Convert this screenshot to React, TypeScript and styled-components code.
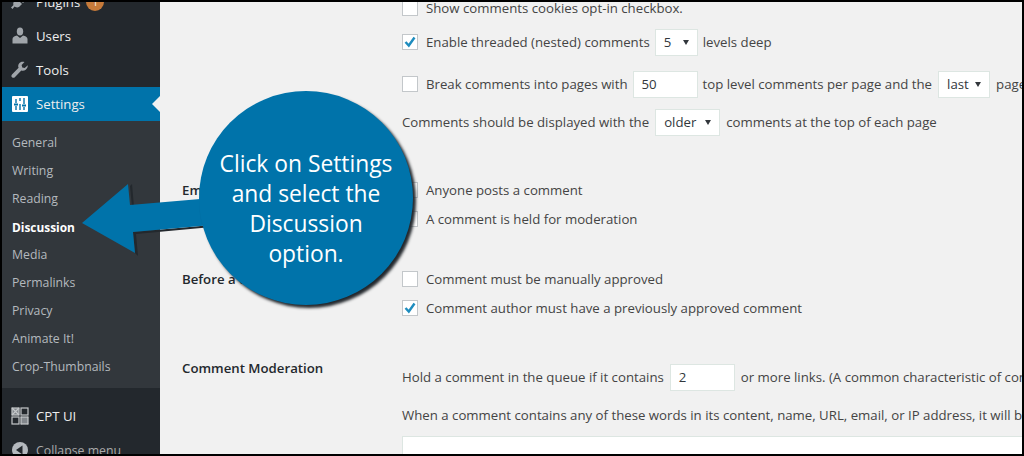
import * as React from 'react';
import styled, { createGlobalStyle } from 'styled-components';

const GlobalStyle = createGlobalStyle`
  html, body { margin: 0; padding: 0; background: #000; }
  body { font-family: "Open Sans", "Noto Sans", sans-serif; font-size: 13px; }
`;

const Frame = styled.div`
  position: relative;
  box-sizing: border-box;
  width: 1024px;
  height: 456px;
  border: 2px solid #000;
  display: flex;
  overflow: hidden;
  background: #f1f1f1;
`;

const Sidebar = styled.nav`
  flex: 0 0 158px;
  background: #23282d;
  display: flex;
  flex-direction: column;
  margin-top: -17px;
`;

const MenuItem = styled.div<{ $active?: boolean }>`
  position: relative;
  flex: 0 0 34px;
  display: flex;
  align-items: center;
  gap: 6px;
  padding-left: 8px;
  color: #eee;
  font-size: 13.2px;
  background: ${({ $active }) => ($active ? '#0073aa' : 'transparent')};
  svg { flex: 0 0 20px; }
`;

const Pointer = styled.span`
  position: absolute;
  right: 0;
  top: 9px;
  border: 8px solid transparent;
  border-right-color: #f1f1f1;
  border-left-width: 0;
`;

const Badge = styled.span`
  width: 18px;
  height: 18px;
  border-radius: 50%;
  background: #c67a3a;
  color: #fff;
  font-size: 9px;
  display: flex;
  align-items: center;
  justify-content: center;
`;

const SubMenu = styled.div`
  background: #32373c;
  padding: 8px 0 7px;
  margin-bottom: 11px;
`;

const SubItem = styled.div<{ $current?: boolean }>`
  height: 28px;
  line-height: 28px;
  padding-left: 10px;
  font-size: ${({ $current }) => ($current ? '11.9px' : '12.25px')};
  color: ${({ $current }) => ($current ? '#fff' : '#b4b9be')};
  font-weight: ${({ $current }) => ($current ? 700 : 400)};
`;

const Collapse = styled(MenuItem)`
  color: #aaa;
  font-size: 12.3px;
`;

const Content = styled.main`
  flex: 1;
  padding: 0 0 0 22px;
  color: #444;
  font-size: 13.23px;
  white-space: nowrap;
  overflow: hidden;
`;

const Section = styled.section<{ $mt: number }>`
  display: grid;
  grid-template-columns: 220px 1fr;
  margin-top: ${({ $mt }) => $mt}px;
`;

const Label = styled.div`
  color: #23282d;
  font-weight: 600;
  line-height: 30px;
`;

const Line = styled.div<{ $mt?: number }>`
  height: 30px;
  display: flex;
  align-items: center;
  margin-top: ${({ $mt }) => $mt ?? 0}px;
`;

const Box = styled.span`
  box-sizing: border-box;
  flex: 0 0 16px;
  width: 16px;
  height: 16px;
  margin-right: 8px;
  background: #fff;
  border: 1px solid #c3c7ca;
  display: flex;
  align-items: center;
  justify-content: center;
`;

const Field = styled.span<{ $w: number; $mx: number }>`
  box-sizing: border-box;
  flex: 0 0 ${({ $w }) => $w}px;
  width: ${({ $w }) => $w}px;
  height: 27px;
  margin: 0 ${({ $mx }) => $mx}px;
  padding: 0 8px;
  background: #fff;
  border: 1px solid #dde6e2;
  color: #32373c;
  display: flex;
  align-items: center;
  justify-content: space-between;
`;

const Caret = styled.span`
  border: 3px solid transparent;
  border-top: 5px solid #32373c;
  border-bottom: 0;
`;

const TextArea = styled.div`
  height: 40px;
  margin-top: 6px;
  background: #fff;
  border: 1px solid #dde6e2;
`;

const Callout = styled.div`
  position: absolute;
  left: 197px;
  top: 89px;
  box-sizing: border-box;
  width: 214px;
  height: 214px;
  padding-top: 22px;
  border-radius: 50%;
  background: #0073aa;
  box-shadow: 3px 3px 3px #23282d;
  display: flex;
  align-items: center;
  justify-content: center;
  text-align: center;
  color: #fff;
  font-size: 22.8px;
  line-height: 30px;
`;

const Arrow = styled.svg`
  position: absolute;
  left: 70px;
  top: 170px;
`;

const Check = () => (
  <svg width="14" height="14" viewBox="0 0 14 14">
    <path d="M2.500 7 L5.800 10.500 L11.500 2.500" fill="none" stroke="#1e8cbe" strokeWidth="2.400" />
  </svg>
);

const PluginIcon = () => (
  <svg width="20" height="20" viewBox="0 0 20 20" fill="#a0a5aa">
    <path d="M13 11 9 7l3-3 1.500 1L16 2.500 17.500 4 15 6.500l1 1.500zM8 8l4 4-3 3c-2 1-4 0-4.500-.5L2.500 17 1 15.500l2.500-2.500C3 12 3 10 5 8.500z" />
  </svg>
);

const UsersIcon = () => (
  <svg width="20" height="20" viewBox="0 0 20 20" fill="#a0a5aa">
    <ellipse cx="10" cy="5.500" rx="3.200" ry="4" />
    <path d="M2.500 17.500v-4.500c0-2 2-3 4.500-3.500l3 2.500 3-2.500c2.500.5 4.500 1.500 4.500 3.500v4.500z" />
  </svg>
);

const ToolsIcon = () => (
  <svg width="20" height="20" viewBox="0 0 20 20" fill="#a0a5aa">
    <path d="M17.800 5.200 14.700 8l-2.400-.6-.7-2.400 2.900-2.900c-2-.7-4.300-.2-5.400 1.300-1 1.300-1.200 3-.5 4.400L2 14.400c-.8.800-.8 2 0 2.800.8.800 2 .8 2.800 0l6.500-6.700c1.500.6 3.200.3 4.400-.8 1.300-1.100 2.200-2.700 2.100-4.500z" />
  </svg>
);

const SettingsIcon = () => (
  <svg width="20" height="20" viewBox="0 0 20 20">
    <rect x="2" y="2" width="16" height="16" rx="1" fill="#fff" />
    <path d="M6 5v4M6 12v4M14 4v6M14 13v3M10 4v3M10 10v6" stroke="#0073aa" strokeWidth="1.400" />
    <path d="M4 10.500h4M12 11.500h4" stroke="#0073aa" strokeWidth="1.800" />
  </svg>
);

const GridIcon = () => (
  <svg width="20" height="20" viewBox="0 0 20 20" fill="none" stroke="#c5c8ca" strokeWidth="1.200">
    <rect x="2" y="2" width="7" height="7" fill="#82878c" />
    <path d="M2 2l7 7M9 2l-7 7M11 11l7 7M18 11l-7 7" />
    <rect x="11" y="2" width="7" height="7" />
    <rect x="2" y="11" width="7" height="7" />
    <rect x="11" y="11" width="7" height="7" fill="#82878c" />
  </svg>
);

const CollapseIcon = () => (
  <svg width="20" height="20" viewBox="0 0 20 20">
    <circle cx="10" cy="10" r="8" fill="#b4b9be" />
    <path d="M12.500 5.500v9L6 10z" fill="#23282d" />
  </svg>
);

const subItems = ['General', 'Writing', 'Reading', 'Discussion', 'Media', 'Permalinks', 'Privacy', 'Animate It!', 'Crop-Thumbnails'];

export default function App() {
  return (
    <>
      <GlobalStyle />
      <Frame>
        <Sidebar>
          <MenuItem><PluginIcon />Plugins<Badge>1</Badge></MenuItem>
          <MenuItem><UsersIcon />Users</MenuItem>
          <MenuItem><ToolsIcon />Tools</MenuItem>
          <MenuItem $active><SettingsIcon />Settings<Pointer /></MenuItem>
          <SubMenu>
            {subItems.map((item) => (
              <SubItem key={item} $current={item === 'Discussion'}>{item}</SubItem>
            ))}
          </SubMenu>
          <MenuItem><GridIcon />CPT UI</MenuItem>
          <Collapse><CollapseIcon />Collapse menu</Collapse>
        </Sidebar>
        <Content>
          <Section $mt={-9}>
            <div />
            <div>
              <Line><Box />Show comments cookies opt-in checkbox.</Line>
              <Line $mt={4}><Box><Check /></Box>Enable threaded (nested) comments<Field $w={43} $mx={5}>5<Caret /></Field>levels deep</Line>
              <Line $mt={12}><Box />Break comments into pages with<Field $w={65} $mx={5}>50</Field>top level comments per page and the<Field $w={52} $mx={6}>last<Caret /></Field>page</Line>
              <Line $mt={8}>Comments should be displayed with the<Field $w={65} $mx={6}>older<Caret /></Field>comments at the top of each page</Line>
            </div>
          </Section>
          <Section $mt={38}>
            <Label>Email me whenever</Label>
            <div>
              <Line><Box />Anyone posts a comment</Line>
              <Line $mt={-1}><Box />A comment is held for moderation</Line>
            </div>
          </Section>
          <Section $mt={30}>
            <Label>Before a comment appears</Label>
            <div>
              <Line><Box />Comment must be manually approved</Line>
              <Line $mt={-1}><Box><Check /></Box>Comment author must have a previously approved comment</Line>
            </div>
          </Section>
          <Section $mt={30}>
            <Label>Comment Moderation</Label>
            <div>
              <Line $mt={9}>Hold a comment in the queue if it contains<Field $w={65} $mx={6}>2</Field>or more links. (A common characteristic of comment spam is a large number of hyperlinks.)</Line>
              <Line $mt={8}>When a comment contains any of these words in its content, name, URL, email, or IP address, it will be held in the moderation queue.</Line>
              <TextArea />
            </div>
          </Section>
        </Content>
        <Arrow width="150" height="100" viewBox="0 0 150 100">
          <path d="M58 14 60 35 62 35 60 12zM61 60 63 81 66 84 64 62 140 55 140 53z" fill="#23282d" />
          <path d="M10 51 56 12 58 33 140 26 140 53 61 60 63 81z" fill="#0073aa" />
        </Arrow>
        <Callout>Click on Settings<br />and select the<br />Discussion<br />option.</Callout>
      </Frame>
    </>
  );
}
